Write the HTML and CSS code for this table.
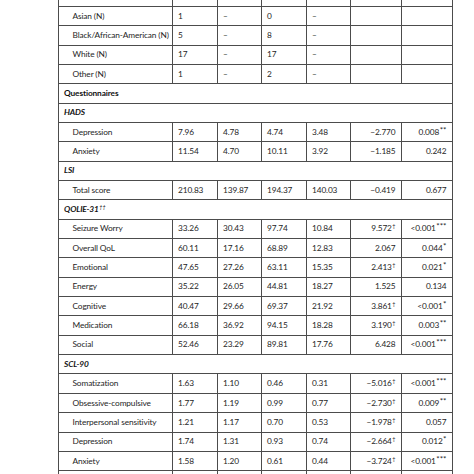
FILE: index.html
```html
<!DOCTYPE html>
<html>
<head>
<meta charset="utf-8">
<link rel="stylesheet" href="styles.css">
</head>
<body>
<table class="stats">
<colgroup>
<col class="c-label"><col class="c-num"><col class="c-num2"><col class="c-num"><col class="c-num2"><col class="c-r"><col class="c-r">
</colgroup>
<tbody>
<tr><td></td><td></td><td></td><td></td><td></td><td></td><td></td></tr>
<tr><td class="sub">Asian (N)</td><td>1</td><td>–</td><td>0</td><td>–</td><td></td><td></td></tr>
<tr><td class="sub">Black/African-American (N)</td><td>5</td><td>–</td><td>8</td><td>–</td><td></td><td></td></tr>
<tr><td class="sub">White (N)</td><td>17</td><td>–</td><td>17</td><td>–</td><td></td><td></td></tr>
<tr><td class="sub">Other (N)</td><td>1</td><td>–</td><td>2</td><td>–</td><td></td><td></td></tr>
<tr><td class="group" colspan="7">Questionnaires</td></tr>
<tr><td class="group it" colspan="7">HADS</td></tr>
<tr><td class="sub">Depression</td><td>7.96</td><td>4.78</td><td>4.74</td><td>3.48</td><td class="r">−2.770</td><td class="r">0.008<sup>**</sup></td></tr>
<tr><td class="sub">Anxiety</td><td>11.54</td><td>4.70</td><td>10.11</td><td>3.92</td><td class="r">−1.185</td><td class="r">0.242</td></tr>
<tr><td class="group it" colspan="7">LSI</td></tr>
<tr><td class="sub">Total score</td><td>210.83</td><td>139.87</td><td>194.37</td><td>140.03</td><td class="r">−0.419</td><td class="r">0.677</td></tr>
<tr><td class="group it" colspan="7">QOLIE-31<sup class="dg">††</sup></td></tr>
<tr><td class="sub">Seizure Worry</td><td>33.26</td><td>30.43</td><td>97.74</td><td>10.84</td><td class="r">9.572<sup class="dg">†</sup></td><td class="r">&lt;0.001<sup>***</sup></td></tr>
<tr><td class="sub">Overall QoL</td><td>60.11</td><td>17.16</td><td>68.89</td><td>12.83</td><td class="r">2.067</td><td class="r">0.044<sup>*</sup></td></tr>
<tr><td class="sub">Emotional</td><td>47.65</td><td>27.26</td><td>63.11</td><td>15.35</td><td class="r">2.413<sup class="dg">†</sup></td><td class="r">0.021<sup>*</sup></td></tr>
<tr><td class="sub">Energy</td><td>35.22</td><td>26.05</td><td>44.81</td><td>18.27</td><td class="r">1.525</td><td class="r">0.134</td></tr>
<tr><td class="sub">Cognitive</td><td>40.47</td><td>29.66</td><td>69.37</td><td>21.92</td><td class="r">3.861<sup class="dg">†</sup></td><td class="r">&lt;0.001<sup>*</sup></td></tr>
<tr><td class="sub">Medication</td><td>66.18</td><td>36.92</td><td>94.15</td><td>18.28</td><td class="r">3.190<sup class="dg">†</sup></td><td class="r">0.003<sup>**</sup></td></tr>
<tr><td class="sub">Social</td><td>52.46</td><td>23.29</td><td>89.81</td><td>17.76</td><td class="r">6.428</td><td class="r">&lt;0.001<sup>***</sup></td></tr>
<tr><td class="group it" colspan="7">SCL-90</td></tr>
<tr><td class="sub">Somatization</td><td>1.63</td><td>1.10</td><td>0.46</td><td>0.31</td><td class="r">−5.016<sup class="dg">†</sup></td><td class="r">&lt;0.001<sup>***</sup></td></tr>
<tr><td class="sub">Obsessive-compulsive</td><td>1.77</td><td>1.19</td><td>0.99</td><td>0.77</td><td class="r">−2.730<sup class="dg">†</sup></td><td class="r">0.009<sup>**</sup></td></tr>
<tr><td class="sub">Interpersonal sensitivity</td><td>1.21</td><td>1.17</td><td>0.70</td><td>0.53</td><td class="r">−1.978<sup class="dg">†</sup></td><td class="r">0.057</td></tr>
<tr><td class="sub">Depression</td><td>1.74</td><td>1.31</td><td>0.93</td><td>0.74</td><td class="r">−2.664<sup class="dg">†</sup></td><td class="r">0.012<sup>*</sup></td></tr>
<tr><td class="sub">Anxiety</td><td>1.58</td><td>1.20</td><td>0.61</td><td>0.44</td><td class="r">−3.724<sup class="dg">†</sup></td><td class="r">&lt;0.001<sup>***</sup></td></tr>
<tr><td></td><td></td><td></td><td></td><td></td><td></td><td></td></tr>
</tbody>
</table>
</body>
</html>
```
FILE: styles.css
```css
html, body {
  margin: 0;
  padding: 0;
  background: #fff;
  overflow: hidden;
}
body {
  font-family: Lato, "Open Sans", sans-serif;
  font-size: 8.3px;
  letter-spacing: -0.12px;
  color: #1e1e1e;
}
.stats {
  border-collapse: collapse;
  table-layout: fixed;
  width: 395px;
  margin-left: 58px;
  margin-top: -13.4px;
}
.c-label { width: 114px; }
.c-num { width: 45px; }
.c-num2 { width: 44px; }
.c-r { width: 51px; }
.stats td {
  border: 1px solid #4c4c4c;
  padding: 0 5px;
  white-space: nowrap;
  overflow: hidden;
  line-height: 9px;
  vertical-align: middle;
}
.stats tr { height: 19.35px; }
.stats td.sub { padding-left: 13.5px; padding-right: 1px; }
.stats td.group { font-weight: 700; padding-left: 5px; color: #111; }
.stats td.it { font-style: italic; }
.stats td.r { text-align: right; padding-right: 5.5px; }
sup {
  font-size: 8px;
  line-height: 0;
  vertical-align: 2px;
  margin-left: 0.5px;
  letter-spacing: 0;
}
sup.dg {
  font-size: 5.5px;
  font-weight: 400;
  vertical-align: 3px;
}
```
